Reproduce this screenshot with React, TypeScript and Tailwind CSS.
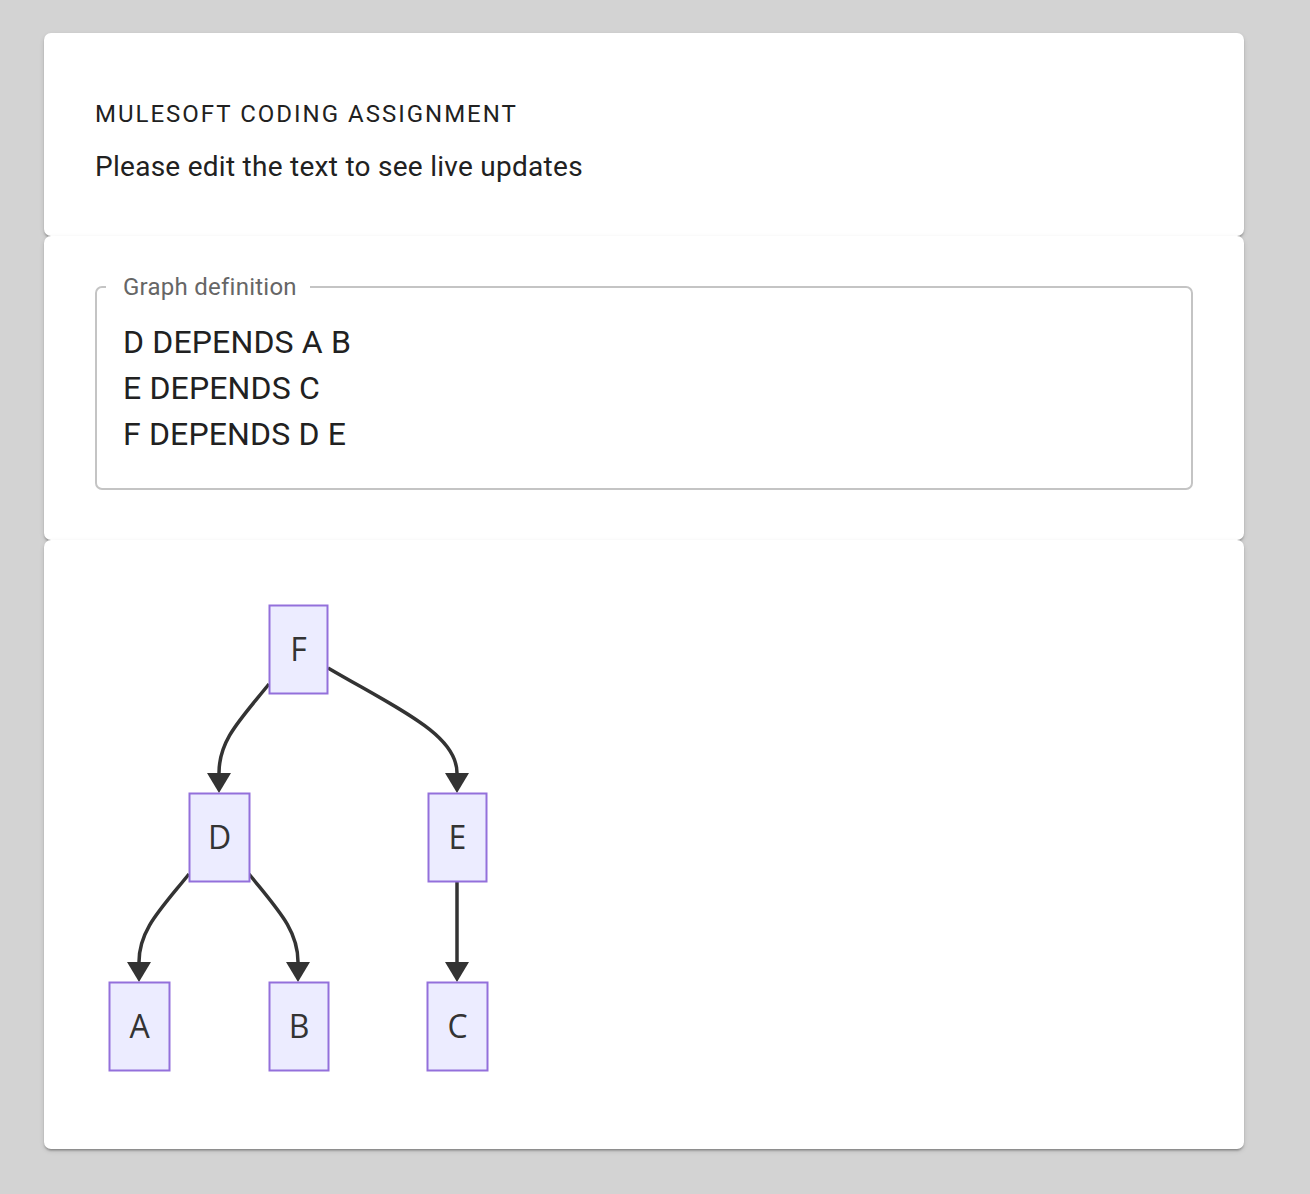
import { Fragment } from "react";

const cardShadow =
  "shadow-[0_3px_2px_-2px_rgba(0,0,0,0.2),0_2px_2px_0_rgba(0,0,0,0.14),0_2px_5px_0_rgba(0,0,0,0.12)]";

const definition = "D DEPENDS A B\nE DEPENDS C\nF DEPENDS D E";

type GraphNode = { id: string; x: number; y: number; w: number };

const nodes: GraphNode[] = [
  { id: "F", x: 175, y: 15, w: 58 },
  { id: "D", x: 95, y: 203, w: 60 },
  { id: "E", x: 334, y: 203, w: 58 },
  { id: "A", x: 15, y: 392, w: 60 },
  { id: "B", x: 175, y: 392, w: 59 },
  { id: "C", x: 333, y: 392, w: 60 },
];

// edge path ends at the arrow base; arrow tip sits on the child's top border
const edges = [
  { d: "M175,94 C146,130 125,150 125,183", tip: [125, 203] },
  { d: "M234,78 C306,120 363,145 363,183", tip: [363, 203] },
  { d: "M95,284 C66,320 45,340 45,372", tip: [45, 392] },
  { d: "M155,284 C184,320 204,340 204,372", tip: [204, 392] },
  { d: "M363,292 L363,372", tip: [363, 392] },
];

const DependencyGraph = () => {
  return (
    <svg width={400} height={509} viewBox="0 0 400 509" className="block">
      {edges.map((edge, i) => (
        <Fragment key={i}>
          <path d={edge.d} fill="none" stroke="#333333" strokeWidth={3.5} />
          <polygon
            points={`${edge.tip[0] - 12},${edge.tip[1] - 20} ${edge.tip[0] + 12},${edge.tip[1] - 20} ${edge.tip[0]},${edge.tip[1]}`}
            fill="#333333"
          />
        </Fragment>
      ))}
      {nodes.map((node) => (
        <g key={node.id}>
          <rect
            x={node.x + 0.5}
            y={node.y + 0.5}
            width={node.w}
            height={88}
            fill="#ECECFF"
            stroke="#9370DB"
            strokeWidth={2}
          />
          <text
            x={node.x + 0.5 + node.w / 2}
            y={node.y + 56}
            textAnchor="middle"
            fill="#333333"
            fontSize={32}
            style={{ fontFamily: '"Open Sans", "DejaVu Sans", sans-serif' }}
          >
            {node.id}
          </text>
        </g>
      ))}
    </svg>
  );
};

const App = () => {
  return (
    <div className="min-h-screen bg-[#d3d3d3] pt-[33px] pb-[45px] font-['Roboto','Liberation_Sans',sans-serif]">
      <div className="ml-[44px] w-[1200px]">
        <div className={`bg-white rounded-[7px] px-[51px] pt-[65px] pb-[49px] ${cardShadow}`}>
          <p className="text-[24px] leading-[32px] tracking-[2px] uppercase text-[#212121]">
            Mulesoft coding assignment
          </p>
          <p className="mt-[17px] text-[28px] leading-[40px] tracking-[0.27px] text-[#212121]">
            Please edit the text to see live updates
          </p>
        </div>

        <div className={`bg-white rounded-[7px] px-[51px] pt-[35px] pb-[50px] ${cardShadow}`}>
          <fieldset className="border-2 border-[#c4c4c4] rounded-[7px] px-[9px] pb-[31px] pt-[16px]">
            <legend className="pl-[17px] pr-[13px] text-[24px] leading-[32px] tracking-[0.25px] text-[#666666]">
              Graph definition
            </legend>
            <textarea
              defaultValue={definition}
              rows={3}
              spellCheck={false}
              className="block w-full h-[138px] pl-[17px] resize-none overflow-hidden outline-none bg-transparent text-[32px] leading-[46px] tracking-[0.15px] text-[#212121]"
            />
          </fieldset>
        </div>

        <div className={`bg-white rounded-[7px] pl-[50px] pt-[50px] pb-[50px] ${cardShadow}`}>
          <DependencyGraph />
        </div>
      </div>
    </div>
  );
};

export default App;
